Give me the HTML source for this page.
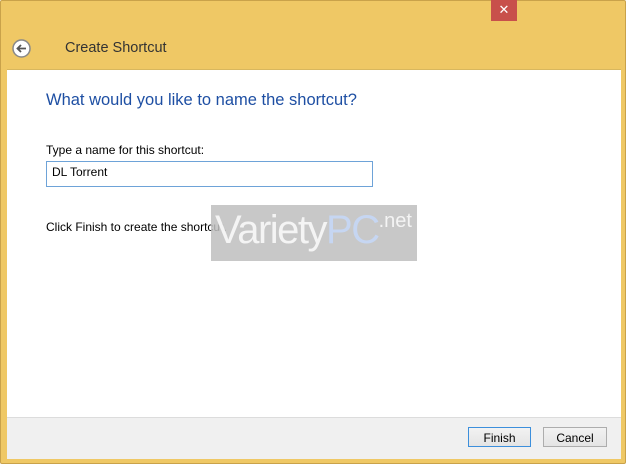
<!DOCTYPE html>
<html><head><style>
body{margin:0;width:628px;height:466px;background:#fff;position:relative;overflow:hidden;font-family:"Liberation Sans",sans-serif}
.win{position:absolute;left:0;top:0;width:626px;height:464px;background:#efc865;border:1px solid #c9a24a;box-sizing:border-box;border-radius:2px}
.close{position:absolute;left:491px;top:0;width:26px;height:21px;background:#c8504b;color:#fff;font-size:13px;text-align:center;line-height:20px}
.content{position:absolute;left:7px;top:69px;width:614px;height:348px;background:#fff;border-top:1px solid #d8b75e}
.footer{position:absolute;left:7px;top:417px;width:614px;height:41px;background:#f0f0f0;border-top:1px solid #dcdcdc}
.t{position:absolute;font-size:12px;color:#000}
.btn{position:absolute;top:427px;height:20px;width:63px;border:1px solid #adadad;background:linear-gradient(#f2f2f2,#e4e4e4);font-size:12px;text-align:center;line-height:20px;box-sizing:border-box}
</style></head><body>
<div class="win"></div>
<div class="close">✕</div>
<svg style="position:absolute;left:11px;top:38px" width="21" height="21"><circle cx="10.5" cy="10.5" r="8.5" fill="#fff" stroke="#888" stroke-width="1.5"/><path d="M15 10.5H6.5M10 7L6.5 10.5L10 14" fill="none" stroke="#555" stroke-width="1.8"/></svg>
<div class="t" style="left:65px;top:40px;font-size:14.5px;color:#333">Create Shortcut</div>
<div class="content"></div>
<div class="t" style="left:46px;top:91px;font-size:16.5px;color:#1e4fa3">What would you like to name the shortcut?</div>
<div class="t" style="left:46px;top:143px">Type a name for this shortcut:</div>
<div style="position:absolute;left:46px;top:161px;width:327px;height:26px;border:1px solid #6ea3d8;box-sizing:border-box"></div>
<div class="t" style="left:52px;top:165px">DL Torrent</div>
<div class="t" style="left:46px;top:220px">Click Finish to create the shortcut.</div>
<div style="position:absolute;left:211px;top:205px;width:206px;height:56px;background:rgba(190,190,190,0.85)"></div>
<div style="position:absolute;left:215px;top:208px;font-size:40px;color:#f4f4f4;letter-spacing:-1.5px;white-space:nowrap">Variety<span style="color:#c6d6f2">PC</span><span style="font-size:20px;vertical-align:16px;letter-spacing:0">.net</span></div>
<div class="footer"></div>
<div class="btn" style="left:468px;border-color:#3c8fdc">Finish</div>
<div class="btn" style="left:543px;width:64px">Cancel</div>
</body></html>
